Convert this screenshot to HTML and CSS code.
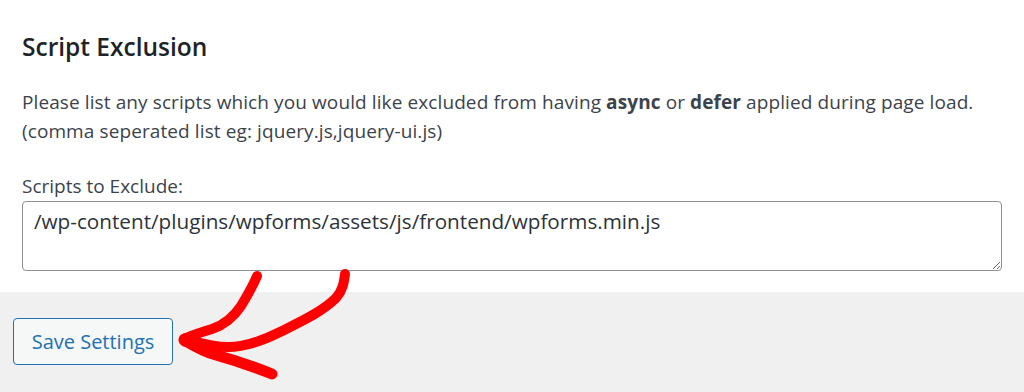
FILE: index.html
```html
<!DOCTYPE html>
<html lang="en">
<head>
<meta charset="utf-8">
<title>Script Exclusion</title>
<link rel="stylesheet" href="styles.css">
</head>
<body>
<div class="page">
  <section class="panel">
    <h2 class="title">Script Exclusion</h2>
    <p class="desc">Please list any scripts which you would like excluded from having <strong>async</strong> or <strong>defer</strong> applied during page load.<br>(comma seperated list eg: jquery.js,jquery-ui.js)</p>
    <label class="field-label" for="exclude">Scripts to Exclude:</label>
    <textarea id="exclude" class="field">/wp-content/plugins/wpforms/assets/js/frontend/wpforms.min.js</textarea>
  </section>
  <footer class="actions">
    <button class="btn" type="button">Save Settings</button>
  </footer>
  <svg class="arrow" width="1024" height="392" viewBox="0 0 1024 392" aria-hidden="true">
    <g fill="none" stroke="#ff0000" stroke-linecap="round" stroke-linejoin="round">
      <path stroke-width="10" d="M257 276 C253 286 247 296 241 306 C233 318 224 325 212 329 C202 332 192 335 184 339"/>
      <path stroke-width="10" d="M345 274 C344 282 343 290 336 298 C322 312 300 322 280 332 C262 341 245 347 228 347 C212 347 196 342 184 339"/>
      <path stroke-width="11" d="M184 340 C194 346 204 352 216 355 C234 360 252 366 272 374"/>
      <circle cx="186" cy="340" r="7" fill="#ff0000" stroke="none"/>
    </g>
  </svg>
</div>
</body>
</html>
```

FILE: styles.css
```css
* {
  box-sizing: border-box;
}

html, body {
  margin: 0;
  padding: 0;
}

body {
  background: #f0f0f1;
  font-family: "Open Sans", "Noto Sans", "Liberation Sans", sans-serif;
  color: #3c434a;
}

.page {
  position: relative;
  width: 1024px;
  height: 392px;
  overflow: hidden;
}

.panel {
  background: #ffffff;
  padding: 31px 22px 21px 22px;
  display: flex;
  flex-direction: column;
}

.title {
  margin: 0;
  font-size: 24.5px;
  line-height: 32px;
  font-weight: 600;
  color: #1d2327;
}

.desc {
  margin: 25px 0 0 0;
  font-size: 19px;
  letter-spacing: 0.1px;
  line-height: 29px;
}

.desc strong {
  font-weight: 700;
  color: #3c434a;
}

.field-label {
  display: block;
  margin-top: 26px;
  font-size: 19px;
  line-height: 29px;
}

.field {
  display: block;
  width: 100%;
  height: 70px;
  margin: 0;
  padding: 5px 11px;
  border: 1px solid #8c8f94;
  border-radius: 4px;
  font-family: inherit;
  font-size: 20.7px;
  line-height: 29px;
  color: #2c3338;
  background: #ffffff;
}

.actions {
  padding: 26px 13px 0 13px;
}

.btn {
  width: 160px;
  height: 47px;
  padding: 0;
  border: 1px solid #2271b1;
  border-radius: 4px;
  background: #f6f7f7;
  color: #2271b1;
  font-family: inherit;
  font-size: 20px;
  cursor: pointer;
}

.arrow {
  position: absolute;
  left: 0;
  top: 0;
  pointer-events: none;
}
```
